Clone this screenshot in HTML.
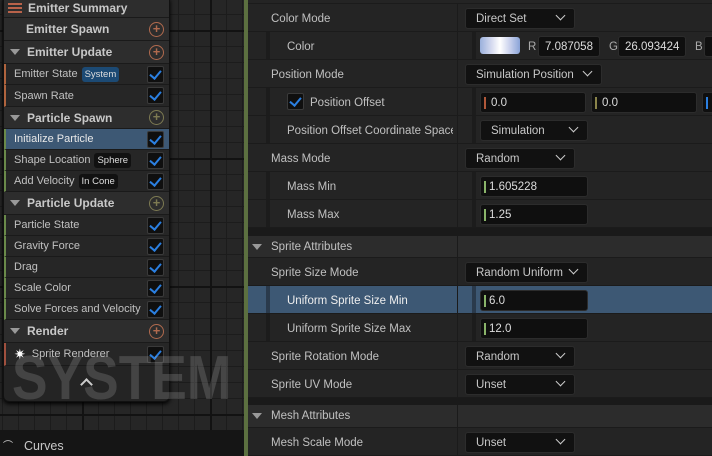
<!DOCTYPE html><html><head><style>
*{margin:0;padding:0;box-sizing:border-box}
body{width:712px;height:456px;overflow:hidden;background:#242424;font-family:"Liberation Sans",sans-serif;font-size:11.5px;color:#c0c0c0;position:relative}
.graph{position:absolute;left:0;top:0;width:244px;height:430px;background-color:#262626;
background-image:linear-gradient(#121212 2px,transparent 2px),linear-gradient(90deg,#121212 2px,transparent 2px),linear-gradient(#1c1c1c 1px,transparent 1px),linear-gradient(90deg,#1c1c1c 1px,transparent 1px);
background-size:128px 128px,128px 128px,16px 16px,16px 16px;background-position:82px 30px,82px 30px,2px 14px,2px 14px}
.curves{position:absolute;left:0;top:430px;width:244px;height:26px;background:#151515;color:#c8c8c8;font-size:12.5px;padding:9px 0 0 24px}
.wm{position:absolute;left:12px;top:348px;font-size:62px;font-weight:bold;color:rgba(200,200,200,.2);transform:scaleX(.86);transform-origin:left;line-height:62px}
.panel{position:absolute;left:3px;top:-2px;width:167px;height:404px;background:#242424;border:1px solid #111;border-top:none;border-radius:0 0 6px 6px;box-shadow:0 2px 4px #000}
.r{position:absolute;left:0;width:165px;border-bottom:1px solid #1a1a1a;display:flex;align-items:center;white-space:nowrap}
.h{background:#2d2d2d;font-weight:bold;color:#c8c8c8;font-size:12px}
.i{background:#262626;padding-left:8px;font-size:11px}
.sel{background:#3d5874;color:#e8e8e8}
.tri{display:inline-block;width:0;height:0;border-left:5px solid transparent;border-right:5px solid transparent;border-top:6px solid #999;margin:0 7px 0 6px}
.plus{position:absolute;right:5px;width:15px;height:15px;border-radius:50%;border:1.5px solid #b06a4e;color:#b06a4e;font-size:13px;line-height:11px;text-align:center;font-weight:bold}
.pg{border-color:#7d7a52;color:#7d7a52}
.cb{position:absolute;right:5px;width:17px;height:17px;background:#0f0f0f;border:1px solid #3a3a3a;border-radius:2px}
.cb:after{content:"";position:absolute;left:4px;top:1px;width:5px;height:9px;border:solid #2b7fe0;border-width:0 2.5px 2.5px 0;transform:rotate(40deg)}
.tag{background:#111;color:#ddd;font-size:9.5px;padding:2px 3px;margin-left:4px;border-radius:3px}
.gbar{position:absolute;left:244px;top:0;width:4px;height:456px;background:#5c7040}
.row{position:absolute;left:248px;width:464px;height:28px;border-bottom:1px solid #1b1b1b;background:#242424}
.row .l{position:absolute;left:23px;top:9px;color:#c0c0c0;white-space:nowrap}
.row .l2{left:39px}
.row .div{position:absolute;left:209px;top:0;width:1px;height:100%;background:#1b1b1b}
.row .ind{position:absolute;left:18px;top:0;width:4px;height:100%;background:#1c1c1c}
.row .ind2{position:absolute;left:224px;top:0;width:4px;height:100%;background:#1c1c1c}
.dd{position:absolute;top:4px;height:21px;background:#111;border:1px solid #2c2c2c;border-radius:3px;color:#c8c8c8;padding:4px 0 0 10px}
.dd .cv{position:absolute;right:10px;top:3px;width:7px;height:7px;border:solid #ccc;border-width:0 1.6px 1.6px 0;transform:rotate(45deg)}
.nf{position:absolute;top:4px;height:21px;background:#0f0f0f;border:1px solid #2c2c2c;border-radius:3px;color:#ddd;padding:4px 0 0 8px}
.bar:before{content:"";position:absolute;left:3px;top:4px;width:2px;height:12px;background:var(--c,#8ab46a)}
.hd{background:#2c2c2c}
.gap{position:absolute;left:248px;width:464px;background:#1a1a1a}
</style></head><body>
<div class="graph"></div>
<div class="panel">
<div class="r h" style="top:0;height:20px"><span style="display:inline-block;width:14px;height:10px;margin:0 6px 0 4px;background:repeating-linear-gradient(#b8624a 0 2px,transparent 2px 4px)"></span>Emitter Summary</div>
<div class="r h" style="top:20px;height:23px"><span style="margin-left:22px">Emitter Spawn</span><span class="plus">+</span></div>
<div class="r h" style="top:43px;height:23px"><span class="tri"></span>Emitter Update<span class="plus">+</span></div>
<div class="r i" style="top:66px;height:21px;border-left:2px solid #b0643e">Emitter State <span class="tag" style="background:#1c4a74">System</span><span class="cb"></span></div>
<div class="r i" style="top:87px;height:22px;border-left:2px solid #b0643e">Spawn Rate<span class="cb"></span></div>
<div class="r h" style="top:109px;height:22px"><span class="tri"></span>Particle Spawn<span class="plus pg">+</span></div>
<div class="r i sel" style="top:131px;height:21px;border-left:2px solid #6a8a4a">Initialize Particle<span class="cb"></span></div>
<div class="r i" style="top:152px;height:21px;border-left:2px solid #6a8a4a">Shape Location <span class="tag">Sphere</span><span class="cb"></span></div>
<div class="r i" style="top:173px;height:21px;border-left:2px solid #6a8a4a">Add Velocity <span class="tag">In Cone</span><span class="cb"></span></div>
<div class="r h" style="top:194px;height:23px"><span class="tri"></span>Particle Update<span class="plus pg">+</span></div>
<div class="r i" style="top:217px;height:21px;border-left:2px solid #6a8a4a">Particle State<span class="cb"></span></div>
<div class="r i" style="top:238px;height:21px;border-left:2px solid #6a8a4a">Gravity Force<span class="cb"></span></div>
<div class="r i" style="top:259px;height:21px;border-left:2px solid #6a8a4a">Drag<span class="cb"></span></div>
<div class="r i" style="top:280px;height:21px;border-left:2px solid #6a8a4a">Scale Color<span class="cb"></span></div>
<div class="r i" style="top:301px;height:21px;border-left:2px solid #6a8a4a">Solve Forces and Velocity<span class="cb"></span></div>
<div class="r h" style="top:322px;height:23px"><span class="tri"></span>Render<span class="plus">+</span></div>
<div class="r i" style="top:345px;height:23px;border-left:2px solid #a0503e"><span style="color:#fff;font-size:14px;margin-right:6px">✷</span>Sprite Renderer<span class="cb"></span></div>
<div style="position:absolute;left:78px;top:382px;width:9px;height:9px;border:solid #ccc;border-width:2px 0 0 2px;transform:rotate(45deg)"></div>
</div>
<div class="wm">SYSTEM</div>
<div class="curves"><span style="position:absolute;left:3px;top:7px;color:#ccc;font-size:10px">⌒</span>Curves</div>
<div class="gbar"></div>

<div class="gap" style="top:0;height:4px;background:#242424;border-bottom:1px solid #1b1b1b"></div>
<div class="row" style="top:4px"><span class="l">Color Mode</span><span class="div"></span><div class="dd" style="left:217px;width:110px">Direct Set<span class="cv"></span></div></div>
<div class="row" style="top:32px"><span class="ind"></span><span class="l l2">Color</span><span class="div"></span><span class="ind2"></span>
<div style="position:absolute;left:232px;top:5px;width:40px;height:17px;border-radius:3px;background:linear-gradient(90deg,#9ab0dc,#d8dcf0 30%,#fff 50%,#c8d0ec 75%,#8aa4d8)"></div>
<span style="position:absolute;left:280px;top:9px;color:#aaa">R</span><div class="nf" style="left:290px;width:62px;padding-left:6px">7.087058</div>
<span style="position:absolute;left:361px;top:9px;color:#aaa">G</span><div class="nf" style="left:370px;width:68px;padding-left:6px">26.093424</div>
<span style="position:absolute;left:447px;top:9px;color:#aaa">B</span><div class="nf" style="left:456px;width:20px"></div></div>
<div class="row" style="top:60px"><span class="l">Position Mode</span><span class="div"></span><div class="dd" style="left:217px;width:137px">Simulation Position<span class="cv"></span></div></div>
<div class="row" style="top:88px"><span class="ind"></span><div class="cb" style="left:39px;top:5px;right:auto"></div><span class="l" style="left:62px">Position Offset</span><span class="div"></span><span class="ind2"></span>
<div class="nf bar" style="left:232px;width:106px;padding-left:10px;--c:#b0583a">0.0</div><div class="nf bar" style="left:343px;width:106px;padding-left:10px;--c:#8a844a">0.0</div><div class="nf bar" style="left:454px;width:20px;--c:#2b7fe0"></div></div>
<div class="row" style="top:116px"><span class="ind"></span><span class="l l2" style="width:166px;overflow:hidden">Position Offset Coordinate Space</span><span class="div"></span><span class="ind2"></span><div class="dd" style="left:232px;width:108px">Simulation<span class="cv"></span></div></div>
<div class="row" style="top:144px"><span class="l">Mass Mode</span><span class="div"></span><div class="dd" style="left:217px;width:110px">Random<span class="cv"></span></div></div>
<div class="row" style="top:172px"><span class="ind"></span><span class="l l2">Mass Min</span><span class="div"></span><span class="ind2"></span><div class="nf bar" style="left:232px;width:108px">1.605228</div></div>
<div class="row" style="top:200px"><span class="ind"></span><span class="l l2">Mass Max</span><span class="div"></span><span class="ind2"></span><div class="nf bar" style="left:232px;width:108px">1.25</div></div>
<div class="gap" style="top:228px;height:8px"></div>
<div class="row hd" style="top:236px;height:22px"><span class="tri" style="position:absolute;left:4px;top:8px;margin:0"></span><span class="l" style="top:5px">Sprite Attributes</span><span class="div"></span></div>
<div class="row" style="top:258px"><span class="l">Sprite Size Mode</span><span class="div"></span><div class="dd" style="left:217px;width:123px">Random Uniform<span class="cv"></span></div></div>
<div class="row" style="top:286px;background:#3d5874"><span class="ind" style="background:#2a3a4c"></span><span class="l l2" style="color:#eee">Uniform Sprite Size Min</span><span class="div"></span><span class="ind2" style="background:#2a3a4c"></span><div class="nf bar" style="left:232px;width:108px">6.0</div></div>
<div class="row" style="top:314px"><span class="ind"></span><span class="l l2">Uniform Sprite Size Max</span><span class="div"></span><span class="ind2"></span><div class="nf bar" style="left:232px;width:108px">12.0</div></div>
<div class="row" style="top:342px"><span class="l">Sprite Rotation Mode</span><span class="div"></span><div class="dd" style="left:217px;width:110px">Random<span class="cv"></span></div></div>
<div class="row" style="top:370px"><span class="l">Sprite UV Mode</span><span class="div"></span><div class="dd" style="left:217px;width:110px">Unset<span class="cv"></span></div></div>
<div class="gap" style="top:398px;height:7px"></div>
<div class="row hd" style="top:405px;height:23px"><span class="tri" style="position:absolute;left:4px;top:8px;margin:0"></span><span class="l" style="top:5px">Mesh Attributes</span><span class="div"></span></div>
<div class="row" style="top:428px"><span class="l">Mesh Scale Mode</span><span class="div"></span><div class="dd" style="left:217px;width:110px">Unset<span class="cv"></span></div></div>
</body></html>
